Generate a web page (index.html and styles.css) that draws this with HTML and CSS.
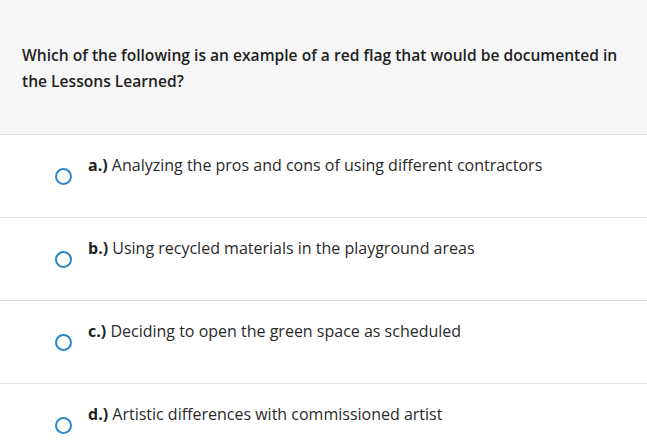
FILE: index.html
```html
<!DOCTYPE html>
<html>
<head>
<meta charset="utf-8">
<link rel="stylesheet" href="styles.css">
</head>
<body>
<div class="question">Which of the following is an example of a red flag that would be documented in the Lessons Learned?</div>
<ul class="options">
  <li class="option"><span class="radio"></span><span class="label"><b>a.)</b> Analyzing the pros and cons of using different contractors</span></li>
  <li class="option"><span class="radio"></span><span class="label"><b>b.)</b> Using recycled materials in the playground areas</span></li>
  <li class="option"><span class="radio"></span><span class="label"><b>c.)</b> Deciding to open the green space as scheduled</span></li>
  <li class="option"><span class="radio"></span><span class="label"><b>d.)</b> Artistic differences with commissioned artist</span></li>
</ul>
</body>
</html>
```
FILE: styles.css
```css
html, body {
  margin: 0;
  padding: 0;
  background: #ffffff;
  font-family: "Open Sans", "Liberation Sans", sans-serif;
  color: #222;
}
.question {
  background: #f6f6f6;
  padding: 42px 22px 40px 22px;
  font-size: 15.6px;
  line-height: 26px;
  font-weight: 600;
  color: #1f1f1f;
  border-bottom: 1px solid #dedede;
}
.options {
  list-style: none;
  margin: 0;
  padding: 0;
}
.option {
  display: flex;
  align-items: flex-start;
  height: 83px;
  box-sizing: border-box;
  padding: 19px 20px 0 55px;
  border-bottom: 1px solid #dedede;
}
.radio {
  flex: none;
  width: 13px;
  height: 13px;
  border: 2px solid #2b87c9;
  border-radius: 50%;
  margin-top: 14px;
  margin-right: 16px;
}
.label {
  font-size: 16px;
  line-height: 22px;
  color: #2a2a2a;
}
.label b {
  font-weight: 700;
  color: #1f1f1f;
}
```
